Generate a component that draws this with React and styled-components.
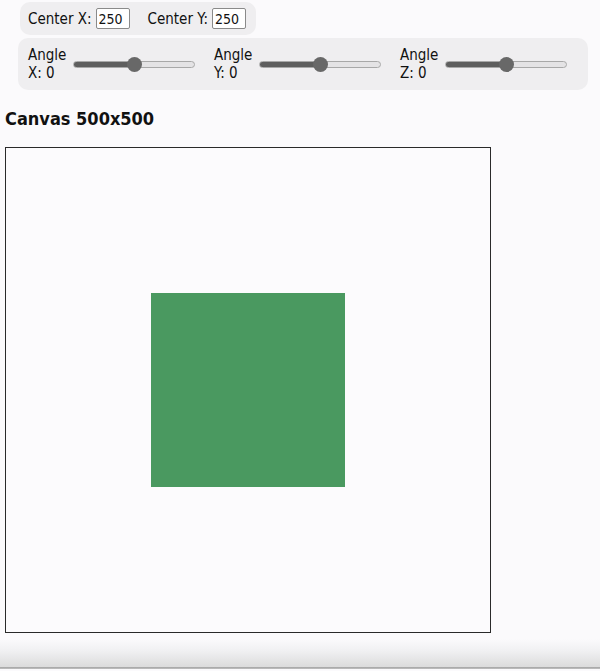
import React, { useState } from "react";
import styled, { createGlobalStyle } from "styled-components";

const FONT = `"DejaVu Sans Condensed", "DejaVu Sans", Verdana, sans-serif`;

const Global = createGlobalStyle`
  html, body { margin: 0; padding: 0; background: #fbfafc; }
  body { font-family: ${FONT}; color: #111; }
`;

const Page = styled.div`
  padding: 2px 0 0 5px;
  display: flex;
  flex-direction: column;
  min-height: 669px;
`;

const Panel = styled.div`
  background: #efeef0;
  border-radius: 10px;
  display: flex;
  align-items: center;
  align-self: flex-start;
  margin-left: ${(p) => p.$ml}px;
  margin-top: ${(p) => p.$mt || 0}px;
  padding: ${(p) => p.$pad};
  gap: ${(p) => p.$gap}px;
  font-size: 15px;
`;

const Field = styled.label`
  display: flex;
  align-items: center;
  gap: 4px;
`;

const NumInput = styled.input`
  width: 28px;
  height: 19px;
  box-sizing: content-box;
  border: 1px solid #8a8a8a;
  border-radius: 2px;
  padding: 0 2px;
  font-family: ${FONT};
  font-size: 14px;
  background: #fff;
  color: #111;
`;

const SliderGroup = styled.div`
  display: flex;
  align-items: center;
  gap: 6px;
`;

const SliderLabel = styled.div`
  width: 39px;
  line-height: 18px;
  white-space: nowrap;
`;

const Range = styled.input`
  -webkit-appearance: none;
  appearance: none;
  width: 122px;
  height: 7px;
  margin: 0;
  border-radius: 4px;
  border: 1px solid #a8a8a8;
  box-sizing: border-box;
  background: linear-gradient(
    to right,
    #5e5e5e 0,
    #5e5e5e ${(p) => p.$pct}%,
    #e4e3e5 ${(p) => p.$pct}%,
    #e4e3e5 100%
  );
  outline: none;
  &::-webkit-slider-thumb {
    -webkit-appearance: none;
    appearance: none;
    width: 15px;
    height: 15px;
    border-radius: 50%;
    background: #686868;
    border: none;
  }
`;

const Heading = styled.h3`
  margin: 18px 0 0;
  font-size: 18px;
  font-weight: bold;
  line-height: 22px;
`;

const Canvas = styled.div`
  margin-top: 17px;
  width: 484px;
  height: 484px;
  border: 1px solid #2a2a2a;
  background: #fcfbfd;
  display: flex;
  align-items: center;
  justify-content: center;
`;

const Square = styled.div`
  width: 194px;
  height: 194px;
  background: #4a9960;
`;

const Footer = styled.div`
  margin: 6px 0 0 -5px;
  height: 30px;
  background: linear-gradient(to bottom, #fbfafc 0%, #f0f0f2 40%, #dcdcdc 92%, #9a9a9a 96%, #d0d0d0 100%);
`;

function Slider({ axis }) {
  const [v, setV] = useState(0);
  const pct = ((v + 180) / 360) * 100;
  return (
    <SliderGroup>
      <SliderLabel>
        Angle
        <br />
        {axis}: {v}
      </SliderLabel>
      <Range
        type="range"
        min={-180}
        max={180}
        value={v}
        $pct={pct}
        onChange={(e) => setV(Number(e.target.value))}
      />
    </SliderGroup>
  );
}

export default function App() {
  const [cx, setCx] = useState("250");
  const [cy, setCy] = useState("250");
  return (
    <>
      <Global />
      <Page>
        <Panel $ml={15} $pad="6px 10px 6px 8px" $gap={18}>
          <Field>
            Center X: <NumInput value={cx} onChange={(e) => setCx(e.target.value)} />
          </Field>
          <Field>
            Center Y: <NumInput value={cy} onChange={(e) => setCy(e.target.value)} />
          </Field>
        </Panel>
        <Panel $ml={13} $mt={3} $pad="8px 21px 8px 10px" $gap={19}>
          <Slider axis="X" />
          <Slider axis="Y" />
          <Slider axis="Z" />
        </Panel>
        <Heading>Canvas 500x500</Heading>
        <Canvas>
          <Square />
        </Canvas>
        <Footer />
      </Page>
    </>
  );
}
